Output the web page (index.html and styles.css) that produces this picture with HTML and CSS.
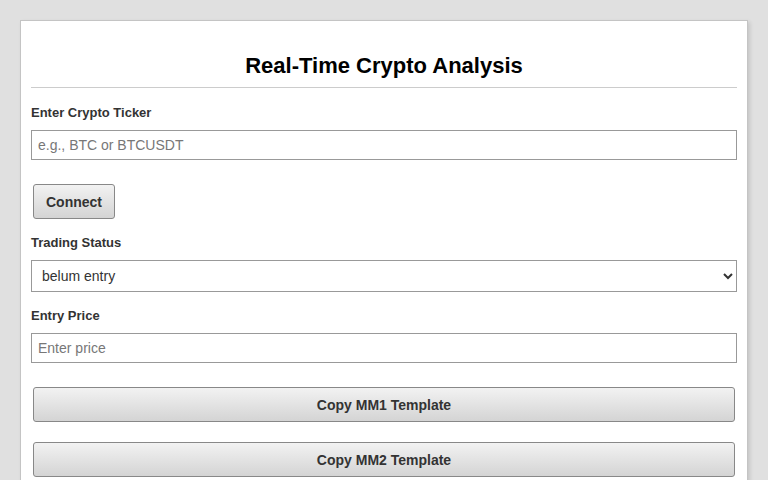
FILE: index.html
```html
<!DOCTYPE html>
<html lang="en">
<head>
    <meta charset="UTF-8">
    <meta name="viewport" content="width=device-width, initial-scale=1.0">
    <title>Real-Time Crypto Analysis</title>
    <link rel="stylesheet" href="styles.css">
</head>
<body>

    <div class="container">
        <h1 class="title">Real-Time Crypto Analysis</h1>

        <div class="form">
            <label class="field-label" for="ticker">Enter Crypto Ticker</label>
            <input type="text" id="ticker" class="field field-ticker" placeholder="e.g., BTC or BTCUSDT">

            <button class="btn btn-connect">Connect</button>

            <label class="field-label" for="status">Trading Status</label>
            <select id="status" class="field field-select">
                <option>belum entry</option>
                <option>sudah entry</option>
            </select>

            <label class="field-label" for="price">Entry Price</label>
            <input type="text" id="price" class="field field-price" placeholder="Enter price">

            <button class="btn btn-wide btn-mm1">Copy MM1 Template</button>
            <button class="btn btn-wide">Copy MM2 Template</button>
        </div>
    </div>

</body>
</html>
```

FILE: styles.css
```css
* {
    box-sizing: border-box;
}

body {
    margin: 0;
    padding: 20px;
    background: #e0e0e0;
    font-family: "Liberation Sans", Arial, sans-serif;
    color: #333;
}

.container {
    background: #fff;
    border: 1px solid #c4c4c4;
    box-shadow: 2px 2px 4px rgba(0, 0, 0, 0.12);
    padding: 10px;
    min-height: 600px;
}

.title {
    margin: 22px 0 17px;
    padding-bottom: 9px;
    border-bottom: 1px solid #ccc;
    font-size: 22px;
    line-height: 25px;
    text-align: center;
    color: #000;
}

.form {
    display: flex;
    flex-direction: column;
}

.field-label {
    font-size: 13px;
    font-weight: bold;
    line-height: 15px;
    margin-bottom: 10px;
}

.field {
    font-family: inherit;
    font-size: 14px;
    color: #333;
    border: 1px solid #999;
    border-radius: 0;
    background: #fff;
    padding: 6px;
    height: 30px;
    margin: 0;
}

.field::placeholder {
    color: #777;
}

.field-ticker,
.field-price {
    margin-bottom: 24px;
}

.field-select {
    height: 32px;
    margin-bottom: 16px;
}

.btn {
    font-family: inherit;
    font-size: 14px;
    font-weight: bold;
    color: #333;
    height: 35px;
    padding: 0 12px;
    border: 1px solid #888;
    border-radius: 3px;
    background: linear-gradient(to bottom, #f2f2f2 0%, #d4d4d4 100%);
    cursor: pointer;
}

.btn-connect {
    align-self: flex-start;
    margin: 0 0 16px 2px;
}

.btn-wide {
    margin: 0 2px;
}

.btn-mm1 {
    margin-bottom: 20px;
}
```
